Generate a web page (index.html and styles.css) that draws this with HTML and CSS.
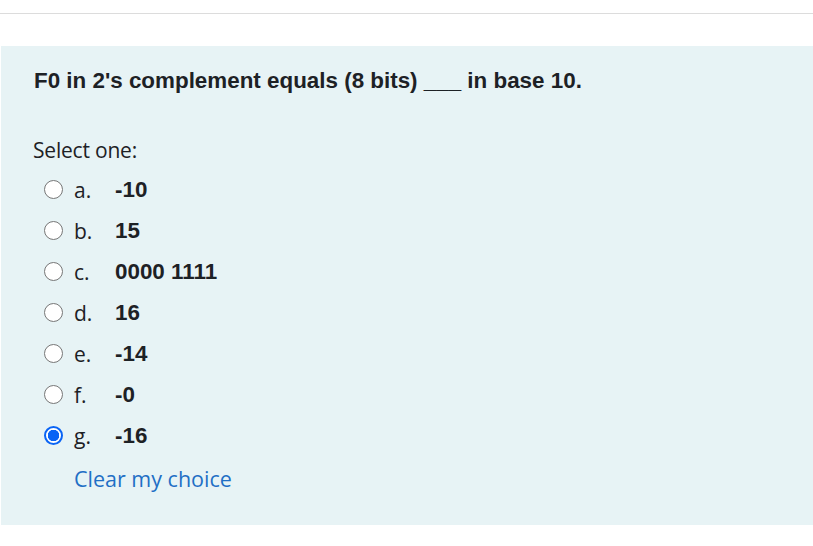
FILE: index.html
```html
<!DOCTYPE html>
<html>
<head>
<meta charset="utf-8">
<link rel="stylesheet" href="styles.css">
</head>
<body>
<div class="topbar"></div>
<div class="que">
  <div class="qtext">F0 in 2's complement equals (8 bits) ___ in base 10.</div>
  <div class="prompt">Select one:</div>
  <div class="answers">
    <div class="row"><span class="radio"></span><span class="letter">a.</span><span class="val">-10</span></div>
    <div class="row"><span class="radio"></span><span class="letter">b.</span><span class="val">15</span></div>
    <div class="row"><span class="radio"></span><span class="letter">c.</span><span class="val">0000 1111</span></div>
    <div class="row"><span class="radio"></span><span class="letter">d.</span><span class="val">16</span></div>
    <div class="row"><span class="radio"></span><span class="letter">e.</span><span class="val">-14</span></div>
    <div class="row"><span class="radio"></span><span class="letter">f.</span><span class="val">-0</span></div>
    <div class="row"><span class="radio checked"></span><span class="letter">g.</span><span class="val">-16</span></div>
  </div>
  <a class="clear" href="#">Clear my choice</a>
</div>
</body>
</html>
```
FILE: styles.css
```css
html, body {
  margin: 0;
  padding: 0;
  background: #fff;
}
.topbar {
  height: 13px;
  border-bottom: 1px solid #dcdcdc;
}
.que {
  margin: 32px 0 0 1px;
  height: 479px;
  box-sizing: border-box;
  background: #e7f3f5;
  padding: 23px 0 0 32px;
}
.qtext {
  font-family: "Liberation Sans", Arial, sans-serif;
  font-weight: bold;
  font-size: 22.4px;
  line-height: 24px;
  color: #1d2125;
  padding-left: 1px;
}
.prompt {
  margin-top: 44px;
  font-family: "Open Sans", sans-serif;
  font-size: 21px;
  line-height: 26px;
  color: #1d2125;
  letter-spacing: -0.2px;
}
.answers {
  margin-top: 6px;
  margin-left: 11px;
}
.row {
  display: flex;
  align-items: center;
  height: 41px;
}
.radio {
  width: 17px;
  height: 17px;
  border: 1px solid #767676;
  border-radius: 50%;
  background: #fff;
  flex: none;
}
.radio.checked {
  border: 2px solid #0a64f5;
  width: 15px;
  height: 15px;
  background: radial-gradient(circle, #0a64f5 0 5.5px, #fff 6px);
}
.letter {
  font-family: "Open Sans", sans-serif;
  font-size: 21px;
  color: #1d2125;
  margin-left: 11px;
  width: 41px;
}
.val {
  font-family: "Liberation Sans", Arial, sans-serif;
  font-weight: bold;
  font-size: 22.4px;
  color: #1d2125;
}
.clear {
  display: inline-block;
  margin: 8px 0 0 41px;
  font-family: "Open Sans", sans-serif;
  font-size: 21.5px;
  color: #1f6fc5;
  text-decoration: none;
}
```
